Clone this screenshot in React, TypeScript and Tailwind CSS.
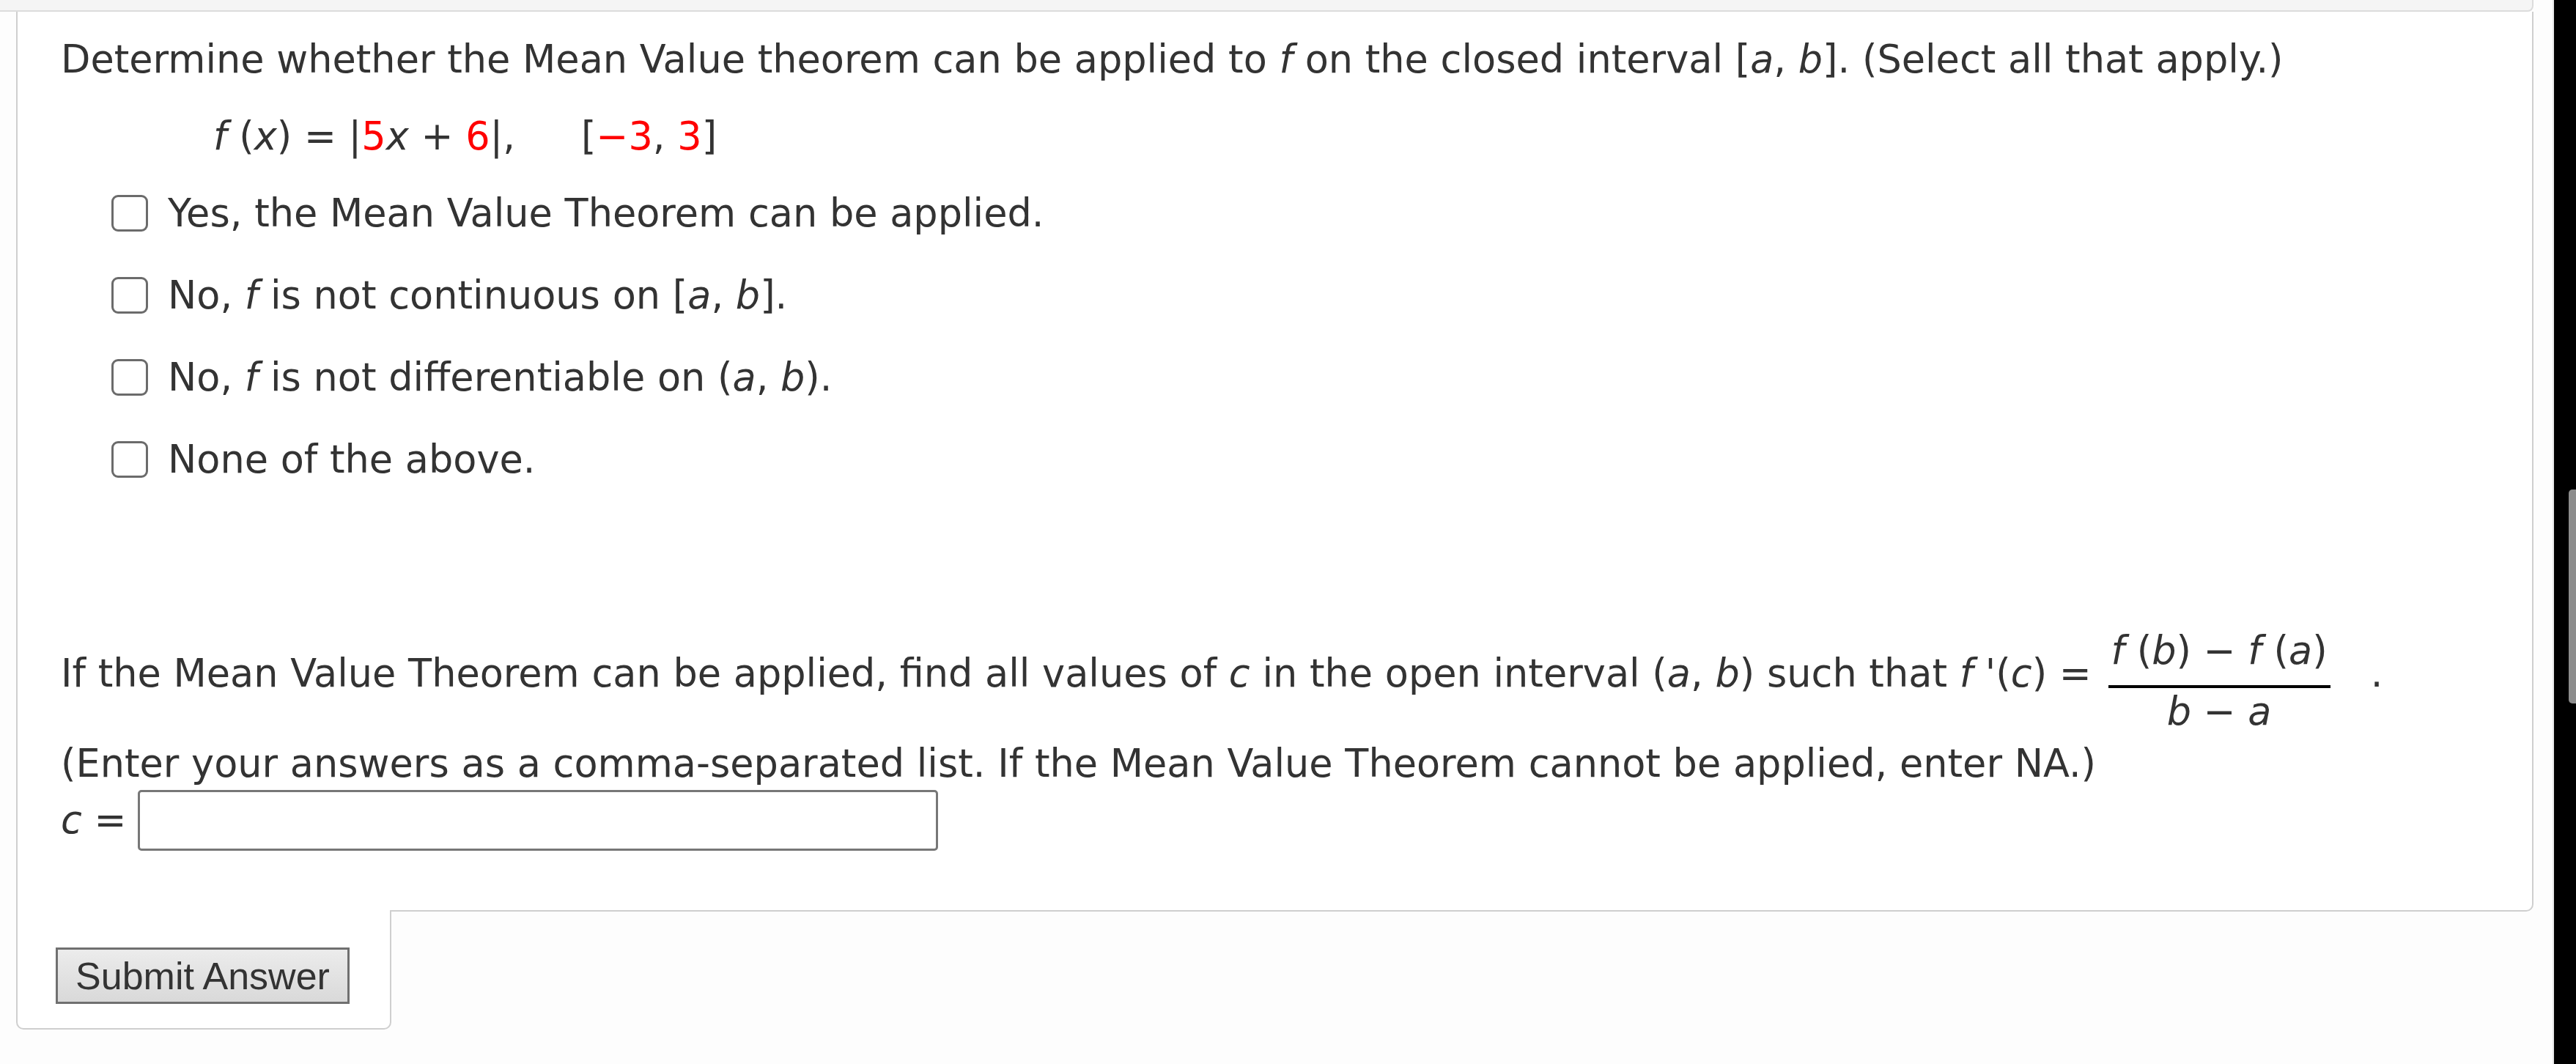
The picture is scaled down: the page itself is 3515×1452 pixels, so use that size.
import React from "react";

function Box({ children, top }: { children: React.ReactNode; top: string }) {
  return (
    <div className={`flex items-center h-[60px] ml-[69px] ${top}`}>
      <span className="inline-block shrink-0 w-[50px] h-[50px] border-[3px] border-[#6b6b6b] rounded-[9px] bg-white" />
      <span className="ml-[27px] whitespace-pre">{children}</span>
    </div>
  );
}

const R = ({ children }: { children: React.ReactNode }) => (
  <span className="text-[#f00]">{children}</span>
);

export default function App() {
  return (
    <div className="flex h-[1452px] w-full overflow-hidden bg-[#fdfdfd] font-['DejaVu_Sans',sans-serif] text-[#333]">
      <div className="flex-1 flex flex-col">
        <div className="h-[16px] w-[3457px] bg-[#f5f5f5] border-b-2 border-r-2 border-[#dcdcdc] rounded-br-[8px]" />
        <div className="ml-[22px] w-[3435px] flex flex-col">
          <div className="border-x-2 border-b-2 border-[#cfcfcf] rounded-br-[10px] bg-white pl-[59px] pt-[35px] pb-[81px] text-[52.5px]">
            <div className="h-[60px] leading-[60px] whitespace-pre">
              Determine whether the Mean Value theorem can be applied to <i>f</i> on the closed interval [<i>a</i>, <i>b</i>]. (Select all that apply.)
            </div>
            <div className="mt-[45px] h-[60px] leading-[60px] pl-[208px] whitespace-pre">
              <i>f</i> (<i>x</i>) = |<R>5</R><i>x</i> + <R>6</R>|,
              <span className="inline-block w-[90px]" />[<R>−3</R>, <R>3</R>]
            </div>
            <Box top="mt-[45px]">Yes, the Mean Value Theorem can be applied.</Box>
            <Box top="mt-[52px]">
              No, <i>f</i> is not continuous on [<i>a</i>, <i>b</i>].
            </Box>
            <Box top="mt-[52px]">
              No, <i>f</i> is not differentiable on (<i>a</i>, <i>b</i>).
            </Box>
            <Box top="mt-[52px]">None of the above.</Box>
            <div className="mt-[206px] flex items-start whitespace-pre">
              <span className="mt-[26px] h-[60px] leading-[60px]">
                If the Mean Value Theorem can be applied, find all values of <i>c</i> in the open interval (<i>a</i>, <i>b</i>) such that <i>f</i> '(<i>c</i>) ={" "}
              </span>
              <span className="ml-[6px] flex flex-col items-stretch">
                <span className="h-[50px] leading-[50px] text-center px-[4px]">
                  <i>f</i> (<i>b</i>) − <i>f</i> (<i>a</i>)
                </span>
                <span className="mt-[22px] h-[4px] bg-black" />
                <span className="mt-[7px] h-[50px] leading-[50px] text-center">
                  <i>b</i> − <i>a</i>
                </span>
              </span>
              <span className="mt-[26px] h-[60px] leading-[60px] ml-[55px]">.</span>
            </div>
            <div className="mt-[16px] h-[60px] leading-[60px] whitespace-pre">
              (Enter your answers as a comma-separated list. If the Mean Value Theorem cannot be applied, enter NA.)
            </div>
            <div className="mt-[6px] h-[83px] flex items-center whitespace-pre">
              <span className="w-[105px]">
                <i>c</i> =
              </span>
              <input
                type="text"
                className="w-[1092px] h-[83px] border-[3px] border-[#777] rounded-[5px] bg-white outline-none"
              />
            </div>
          </div>
          <div className="relative -mt-[2px] w-[512px] h-[163px] border-x-2 border-b-2 border-[#cfcfcf] rounded-b-[10px] bg-white pl-[52px] pt-[51px]">
            <button className="w-[401px] h-[77px] border-[3px] border-[#707070] bg-linear-to-b from-[#ececec] to-[#d9d9d9] font-['Liberation_Sans',Arial,sans-serif] text-[52px] leading-none text-[#333]">
              Submit Answer
            </button>
          </div>
        </div>
      </div>
      <div className="w-[32px] h-full bg-black border-l-2 border-[#e6e6e6] flex flex-col pt-[668px]">
        <div className="ml-auto w-[10px] h-[292px] bg-[#8c8c8c] rounded-l-[5px]" />
      </div>
    </div>
  );
}
